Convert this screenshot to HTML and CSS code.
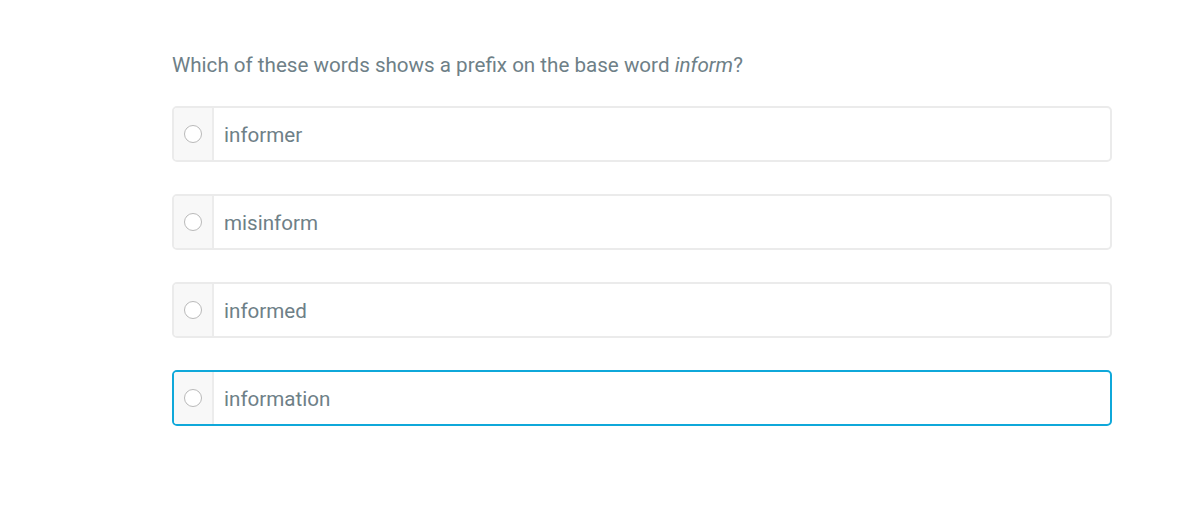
FILE: index.html
```html
<!DOCTYPE html>
<html lang="en">
<head>
<meta charset="utf-8">
<title>Quiz</title>
<link rel="stylesheet" href="styles.css">
</head>
<body>
<main class="quiz">
  <p class="question">Which of these words shows a prefix on the base word <em>inform</em>?</p>
  <ul class="options">
    <li class="option"><span class="radio-cell"><span class="radio"></span></span><span class="label">informer</span></li>
    <li class="option"><span class="radio-cell"><span class="radio"></span></span><span class="label">misinform</span></li>
    <li class="option"><span class="radio-cell"><span class="radio"></span></span><span class="label">informed</span></li>
    <li class="option selected"><span class="radio-cell"><span class="radio"></span></span><span class="label">information</span></li>
  </ul>
</main>
</body>
</html>
```

FILE: styles.css
```css
html, body {
  margin: 0;
  padding: 0;
  background: #ffffff;
}
body {
  font-family: "Roboto", "Noto Sans", sans-serif;
  color: #6e8087;
}
.quiz {
  width: 940px;
  padding: 52px 0 0 172px;
}
.question {
  margin: 0;
  font-size: 20.6px;
  line-height: 26px;
  color: #6e8087;
}
.question em {
  font-style: italic;
}
.options {
  list-style: none;
  margin: 28px 0 0 0;
  padding: 0;
  display: flex;
  flex-direction: column;
  gap: 32px;
}
.option {
  display: flex;
  height: 56px;
  box-sizing: border-box;
  border: 2px solid #ebebeb;
  border-radius: 5px;
  overflow: hidden;
}
.option.selected {
  border-color: #0fa8da;
}
.radio-cell {
  width: 38px;
  flex: none;
  background: #f8f8f8;
  border-right: 2px solid #ececec;
  display: flex;
  align-items: center;
  justify-content: center;
}
.radio {
  width: 16px;
  height: 16px;
  border: 1px solid #b9b9b9;
  border-radius: 50%;
  background: #fff;
}
.label {
  display: flex;
  align-items: center;
  padding: 2px 0 0 10px;
  font-size: 20.6px;
  color: #6e8087;
}
```
